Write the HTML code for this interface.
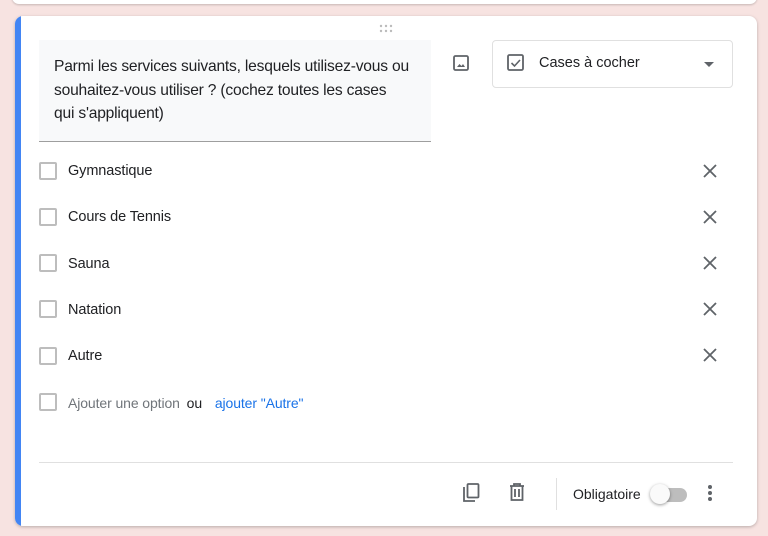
<!DOCTYPE html><html><head><style>
body{margin:0;width:768px;height:536px;background:#f7e3e1;font-family:"Liberation Sans",sans-serif;position:relative;overflow:hidden;color:#202124}
.a{position:absolute}
.cb{position:absolute;left:39px;width:18px;height:18px;border:2px solid #bdbdbd;border-radius:2px;box-sizing:border-box}
.lab{position:absolute;left:68px;font-size:14.5px;letter-spacing:-0.1px}
.x{position:absolute;left:702px;width:16px;height:16px}
</style></head><body>
<div class="a" style="left:12px;top:-10px;width:745px;height:14px;background:#fff;border-radius:8px;box-shadow:0 1px 2px rgba(0,0,0,.2)"></div>
<div class="a" style="left:15px;top:16px;width:742px;height:510px;background:#fff;border-radius:8px;box-shadow:0 1px 3px rgba(0,0,0,.25);overflow:hidden">
<div class="a" style="left:0;top:0;width:6px;height:510px;background:#4285f4"></div>
</div>
<svg class="a" style="left:379px;top:24px" width="16" height="10"><g fill="#bbb"><circle cx="2" cy="2" r="1.2"/><circle cx="7" cy="2" r="1.2"/><circle cx="12" cy="2" r="1.2"/><circle cx="2" cy="7" r="1.2"/><circle cx="7" cy="7" r="1.2"/><circle cx="12" cy="7" r="1.2"/></g></svg>
<div class="a" style="left:39px;top:40px;width:392px;height:101px;background:#f8f9fa;border-bottom:1px solid #9e9e9e"></div>
<div class="a" style="left:54px;top:55px;width:380px;white-space:nowrap;font-size:15.6px;line-height:23.5px;letter-spacing:-0.2px">Parmi les services suivants, lesquels utilisez-vous ou<br>souhaitez-vous utiliser ? (cochez toutes les cases<br>qui s'appliquent)</div>
<svg class="a" style="left:452px;top:54px" width="18" height="18" viewBox="0 0 18 18"><rect x="2" y="2" width="14" height="14" rx="1.5" fill="none" stroke="#5f6368" stroke-width="1.8"/><path d="M5 13l2.5-3 2 2 1.5-2 2 3z" fill="#5f6368"/></svg>
<div class="a" style="left:492px;top:40px;width:241px;height:48px;border:1px solid #e0e0e0;border-radius:4px;box-sizing:border-box"></div>
<svg class="a" style="left:506px;top:53px" width="20" height="20" viewBox="0 0 20 20"><rect x="2" y="2" width="15" height="15" rx="1.5" fill="none" stroke="#5f6368" stroke-width="1.8"/><path d="M5.5 10l3 3 5.5-6" fill="none" stroke="#5f6368" stroke-width="1.6"/></svg>
<div class="a" style="left:539px;top:55px;font-size:14.5px">Cases à cocher</div>
<div class="a" style="left:704px;top:62px;border-left:5px solid transparent;border-right:5px solid transparent;border-top:5px solid #5f6368"></div>

<div class="cb" style="top:162px"></div><div class="lab" style="top:163px">Gymnastique</div>
<div class="cb" style="top:208px"></div><div class="lab" style="top:209px">Cours de Tennis</div>
<div class="cb" style="top:254px"></div><div class="lab" style="top:256px">Sauna</div>
<div class="cb" style="top:300px"></div><div class="lab" style="top:302px">Natation</div>
<div class="cb" style="top:347px"></div><div class="lab" style="top:348px">Autre</div>
<div class="cb" style="top:393px"></div>
<div class="lab" style="top:395px;font-size:14px;color:#70757a">Ajouter une option <span style="color:#202124;margin-left:3px">ou</span> <span style="color:#1a73e8;margin-left:9px">ajouter "Autre"</span></div>
<svg class="x" style="top:163px" viewBox="0 0 16 16"><path d="M2 2l12 12M14 2L2 14" stroke="#5f6368" stroke-width="1.8"/></svg>
<svg class="x" style="top:209px" viewBox="0 0 16 16"><path d="M2 2l12 12M14 2L2 14" stroke="#5f6368" stroke-width="1.8"/></svg>
<svg class="x" style="top:255px" viewBox="0 0 16 16"><path d="M2 2l12 12M14 2L2 14" stroke="#5f6368" stroke-width="1.8"/></svg>
<svg class="x" style="top:301px" viewBox="0 0 16 16"><path d="M2 2l12 12M14 2L2 14" stroke="#5f6368" stroke-width="1.8"/></svg>
<svg class="x" style="top:347px" viewBox="0 0 16 16"><path d="M2 2l12 12M14 2L2 14" stroke="#5f6368" stroke-width="1.8"/></svg>

<div class="a" style="left:39px;top:462px;width:694px;height:1px;background:#e0e0e0"></div>
<svg class="a" style="left:461px;top:482px" width="20" height="22" viewBox="0 0 20 22"><path d="M3 5v14h11" fill="none" stroke="#5f6368" stroke-width="1.8"/><rect x="6.5" y="2" width="11" height="13.5" rx="1" fill="none" stroke="#5f6368" stroke-width="1.8"/></svg>
<svg class="a" style="left:508px;top:482px" width="18" height="20" viewBox="0 0 18 20"><path d="M2 4h14M6 4V2h6v2M3.5 4v14h11V4M7 7v8M11 7v8" fill="none" stroke="#5f6368" stroke-width="1.8"/></svg>
<div class="a" style="left:556px;top:478px;width:1px;height:32px;background:#e0e0e0"></div>
<div class="a" style="left:573px;top:486px;font-size:14px">Obligatoire</div>
<div class="a" style="left:653px;top:488px;width:34px;height:14px;border-radius:7px;background:#bdbdbd"></div>
<div class="a" style="left:650px;top:484px;width:20px;height:20px;border-radius:50%;background:#fafafa;box-shadow:0 1px 3px rgba(0,0,0,.4)"></div>
<svg class="a" style="left:706px;top:484px" width="8" height="18"><g fill="#5f6368"><circle cx="4" cy="3" r="2"/><circle cx="4" cy="9" r="2"/><circle cx="4" cy="15" r="2"/></g></svg>
</body></html>
